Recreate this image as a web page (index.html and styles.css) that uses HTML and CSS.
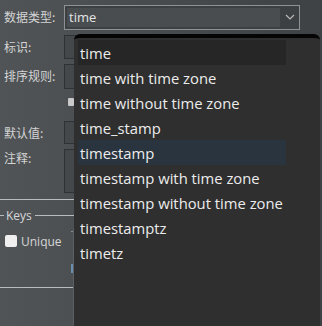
FILE: index.html
```html
<!DOCTYPE html>
<html>
<head>
<meta charset="utf-8">
<link rel="stylesheet" href="styles.css">
</head>
<body>
<div class="panel">
  <div class="row r1">
    <span class="label">数据类型:</span>
    <div class="combo">
      <div class="combo-field">time</div>
      <div class="combo-arrow">
        <svg width="10" height="6" viewBox="0 0 10 6"><path d="M1 1 L5 5 L9 1" fill="none" stroke="#b8b8b8" stroke-width="1.2"/></svg>
      </div>
    </div>
  </div>
  <div class="row r2">
    <span class="label">标识:</span>
    <div class="input"></div>
  </div>
  <div class="row r3">
    <span class="label">排序规则:</span>
    <div class="input"></div>
  </div>
  <div class="slider-row"><div class="handle"></div></div>
  <div class="row r4">
    <span class="label">默认值:</span>
    <div class="input"></div>
  </div>
  <div class="row r5">
    <span class="label">注释:</span>
    <div class="input tall"></div>
  </div>
  <div class="sep s1"></div>
  <div class="group">
    <div class="group-title"><span class="gl short"></span><span class="gt">Keys</span><span class="gl"></span></div>
    <div class="group-body">
      <label class="check"><span class="box"></span><span class="ct">Unique</span><span class="tick"></span></label>
      <div class="mark"></div>
      <div class="sep s2"></div>
    </div>
  </div>
</div>
<div class="popup">
  <ul class="list">
    <li class="item current">time</li>
    <li class="item">time with time zone</li>
    <li class="item">time without time zone</li>
    <li class="item">time_stamp</li>
    <li class="item hover">timestamp</li>
    <li class="item">timestamp with time zone</li>
    <li class="item">timestamp without time zone</li>
    <li class="item">timestamptz</li>
    <li class="item">timetz</li>
  </ul>
</div>
</body>
</html>
```
FILE: styles.css
```css
html, body {
  margin: 0;
  padding: 0;
}
body {
  width: 322px;
  height: 326px;
  overflow: hidden;
  position: relative;
  background: linear-gradient(90deg, #505457 0%, #45494c 60%, #3f4245 100%);
  font-family: "Noto Sans CJK SC", "Noto Sans", sans-serif;
  color: #d6d6d6;
}
.panel {
  padding-top: 5px;
  display: flex;
  flex-direction: column;
  height: 321px;
  overflow: hidden;
}
.row {
  display: flex;
  align-items: center;
  height: 24px;
}
.label {
  width: 60px;
  padding-left: 4px;
  font-size: 12px;
  line-height: 14px;
  color: #d4d4d4;
}
.combo {
  height: 25px;
  width: 236px;
  box-sizing: border-box;
  border: 1px solid #8f9193;
  background: #3d4042;
  display: flex;
  padding: 2px 0 2px 2px;
}
.combo-field {
  flex: 1;
  background: #4a4d50;
  font-family: "Open Sans", sans-serif;
  font-size: 13px;
  line-height: 19px;
  padding-left: 2px;
  color: #e4e4e4;
}
.combo-arrow {
  width: 19px;
  display: flex;
  align-items: center;
  justify-content: center;
}
.input {
  width: 200px;
  height: 24px;
  box-sizing: border-box;
  border: 1px solid #2f3234;
  background: #45484b;
}
.r2 { margin-top: 6px; }
.r3 { margin-top: 5px; }
.r3 .input { height: 25px; }
.slider-row {
  height: 8px;
  margin-top: 10px;
  padding-left: 68px;
}
.handle {
  width: 6px;
  height: 8px;
  background: #c9c9c9;
  border-radius: 1px;
}
.r4 { margin-top: 15px; height: 23px; }
.r4 .input { height: 23px; }
.r5 {
  margin-top: 5px;
  height: 44px;
  align-items: flex-start;
}
.r5 .label { margin-top: 2px; }
.input.tall { height: 44px; }
.sep {
  height: 1px;
  background: #b9bbbd;
  width: 74px;
  flex: none;
}
.s1 { margin-top: 6px; }
.group {
  margin-top: 8px;
}
.group-title {
  display: flex;
  align-items: center;
  height: 15px;
  width: 74px;
}
.gl {
  flex: 1;
  height: 1px;
  background: #b9bbbd;
}
.gl.short { flex: none; width: 4px; }
.gt {
  font-family: "Open Sans", sans-serif;
  font-size: 12px;
  color: #d6d6d6;
  padding: 0 3px 0 2px;
  line-height: 15px;
}
.group-body {
  width: 74px;
  box-sizing: border-box;
  border-right: 1px solid #5c6063;
  margin-top: 6px;
  padding-top: 6px;
  height: 96px;
}
.check {
  display: flex;
  align-items: center;
  padding-left: 5px;
  height: 12px;
}
.box {
  width: 12px;
  height: 12px;
  background: #efefef;
  border-radius: 2px;
}
.ct {
  font-family: "Open Sans", sans-serif;
  font-size: 12px;
  color: #d6d6d6;
  margin-left: 4px;
  flex: 1;
}
.tick {
  width: 2px;
  height: 1px;
  background: #8a8d90;
  align-self: flex-start;
  margin-top: -4px;
}
.mark {
  width: 2px;
  height: 9px;
  background: #6d8fae;
  margin: 17px 0 0 71px;
}
.s2 { margin-top: 14px; width: 73px; }
.popup {
  position: absolute;
  left: 74px;
  top: 34px;
  width: 246px;
  bottom: 0;
  background: #2f2f2f;
  border-top: 4px solid #050505;
  border-radius: 6px 6px 0 0;
}
.list {
  list-style: none;
  margin: 0;
  padding: 2px 0 0 4px;
}
.item {
  width: 208px;
  height: 25px;
  box-sizing: border-box;
  padding-left: 2px;
  font-family: "Open Sans", sans-serif;
  font-size: 14.8px;
  line-height: 26px;
  color: #ececec;
  white-space: nowrap;
}
.item.current { background: #262626; }
.item.hover { background: #29343e; }
```
